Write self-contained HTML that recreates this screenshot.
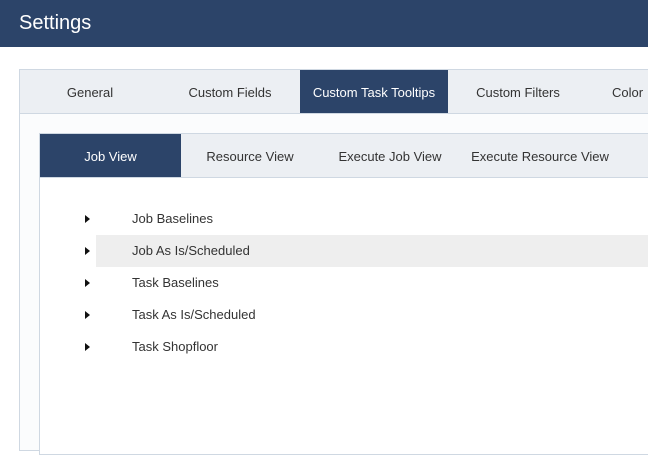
<!DOCTYPE html><html><head><style>
body{margin:0;width:648px;height:436px;overflow:hidden;background:#fff;font-family:"Liberation Sans",sans-serif;font-size:13px;color:#333;position:relative}
.hdr{position:absolute;left:0;top:0;width:648px;height:47px;background:#2c4469;color:#fff;font-size:20px;line-height:47px;padding-left:19px;box-sizing:border-box}
.outer{position:absolute;left:19px;top:69px;width:640px;height:380px;border:1px solid #cfd8e2;background:#fbfcfd}
.tabs{position:absolute;left:0;top:0;width:100%;height:43px;background:#eceff3;border-bottom:1px solid #cfd8e2}
.t{position:absolute;top:0;height:43px;line-height:45px;text-align:center}
.act{background:#2c4469;color:#fff}
.inner{position:absolute;left:19px;top:63px;width:620px;height:320px;border:1px solid #cfd8e2;background:#fff}
.it{height:43px}
.row{position:absolute;left:0;width:620px;height:32px;line-height:32px}
.row .a{position:absolute;left:45px;top:12px;width:0;height:0;border-top:4px solid transparent;border-bottom:4px solid transparent;border-left:5px solid #111}
.row .l{position:absolute;left:92px}
</style></head><body>
<div class="hdr">Settings</div>
<div class="outer">
<div class="tabs">
<div class="t" style="left:0;width:140px">General</div>
<div class="t" style="left:140px;width:140px">Custom Fields</div>
<div class="t act" style="left:280px;width:148px">Custom Task Tooltips</div>
<div class="t" style="left:428px;width:140px">Custom Filters</div>
<div class="t" style="left:568px;width:80px;text-align:left;padding-left:24px">Color</div>
</div>
<div class="inner">
<div class="tabs it">
<div class="t act" style="left:0;width:141px">Job View</div>
<div class="t" style="left:141px;width:138px">Resource View</div>
<div class="t" style="left:279px;width:142px">Execute Job View</div>
<div class="t" style="left:421px;width:158px">Execute Resource View</div>
</div>
<div class="row" style="top:69px"><span class="a"></span><span class="l">Job Baselines</span></div>
<div class="row" style="top:101px"><div style="position:absolute;left:56px;top:0;width:570px;height:32px;background:#eeeeee"></div><span class="a"></span><span class="l">Job As Is/Scheduled</span></div>
<div class="row" style="top:133px"><span class="a"></span><span class="l">Task Baselines</span></div>
<div class="row" style="top:165px"><span class="a"></span><span class="l">Task As Is/Scheduled</span></div>
<div class="row" style="top:197px"><span class="a"></span><span class="l">Task Shopfloor</span></div>
</div>
</div>
</body></html>
